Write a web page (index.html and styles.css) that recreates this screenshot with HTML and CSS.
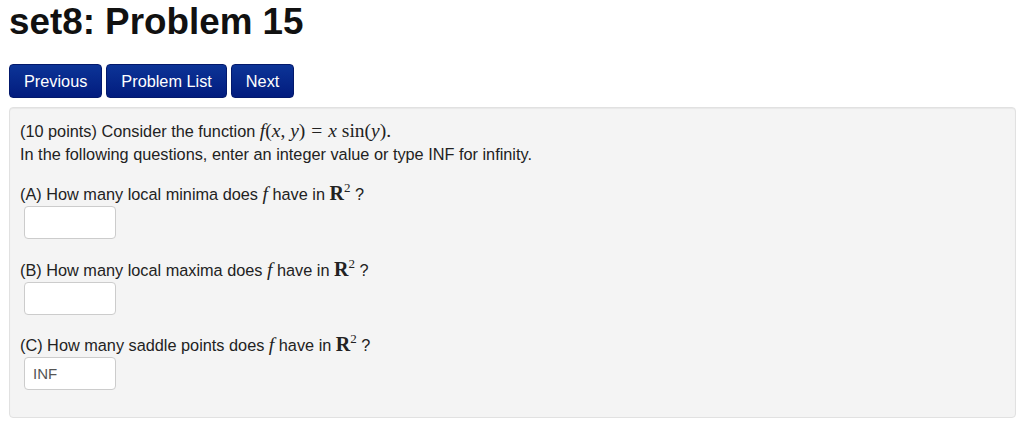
FILE: index.html
```html
<!DOCTYPE html>
<html lang="en">
<head>
  <meta charset="UTF-8" />
  <title>set8: Problem 15</title>
  <link rel="stylesheet" href="styles.css">
</head>
<body>
  <h1 class="title">set8: Problem 15</h1>

  <div class="nav">
    <button class="nav-btn">Previous</button>
    <button class="nav-btn">Problem List</button>
    <button class="nav-btn">Next</button>
  </div>

  <div class="well">
    <div class="intro-line first">(10 points) Consider the function <span class="math"><i>f</i>(<i>x</i>, <i>y</i>)<span class="rel">=</span><i>x</i> sin(<i>y</i>).</span></div>
    <div class="intro-line">In the following questions, enter an integer value or type INF for infinity.</div>

    <div class="question q-a">(A) How many local minima does <span class="math"><i>f</i></span> have in <span class="math"><b>R</b><sup>2</sup></span> ?</div>
    <input class="answer" type="text" value="">

    <div class="question q-b">(B) How many local maxima does <span class="math"><i>f</i></span> have in <span class="math"><b>R</b><sup>2</sup></span> ?</div>
    <input class="answer" type="text" value="">

    <div class="question q-c">(C) How many saddle points does <span class="math"><i>f</i></span> have in <span class="math"><b>R</b><sup>2</sup></span> ?</div>
    <input class="answer" type="text" value="INF">
  </div>
</body>
</html>
```

FILE: styles.css
```css
body {
  margin: 0;
  padding: 0 8px 0 9px;
  background: #fff;
  color: #222;
  font-family: "Liberation Sans", Arial, sans-serif;
  font-size: 16.3px;
}
.title {
  margin: 2px 0 22px;
  font-size: 36.8px;
  line-height: 40px;
  font-weight: bold;
  color: #111;
}
.nav {
  display: flex;
  gap: 4px;
  margin-bottom: 9px;
}
.nav-btn {
  height: 34px;
  padding: 0 14px;
  font-family: "Liberation Sans", Arial, sans-serif;
  font-size: 16.3px;
  color: #fff;
  background: linear-gradient(#0c3497, #021c7e);
  border: 1px solid #03196c;
  border-radius: 4px;
  cursor: pointer;
}
.well {
  display: flex;
  flex-direction: column;
  align-items: flex-start;
  padding: 10px 10px 27px;
  background: #f4f4f4;
  border: 1px solid #e1e1e1;
  border-radius: 4px;
  box-shadow: inset 0 1px 1px rgba(0,0,0,0.05);
}
.intro-line {
  line-height: 20px;
}
.intro-line.first {
  line-height: 26px;
}
.question {
  line-height: 20px;
}
.q-a {
  margin-top: 20px;
}
.q-b {
  margin-top: 21px;
}
.q-c {
  margin-top: 20px;
}
.math {
  font-family: "Liberation Serif", "Times New Roman", serif;
  font-size: 19.5px;
  line-height: 0;
}
.math .rel {
  margin: 0 6px;
}
.math b {
  font-size: 20px;
}
.math sup {
  position: relative;
  top: -8px;
  font-size: 13px;
  vertical-align: baseline;
  line-height: 0;
}
.answer {
  box-sizing: border-box;
  width: 92px;
  height: 33px;
  margin: 2px 0 0 4px;
  padding: 4px 8px;
  font-family: "Liberation Sans", Arial, sans-serif;
  font-size: 15px;
  color: #555;
  background: #fff;
  border: 1px solid #ccc;
  border-radius: 4px;
}
```
